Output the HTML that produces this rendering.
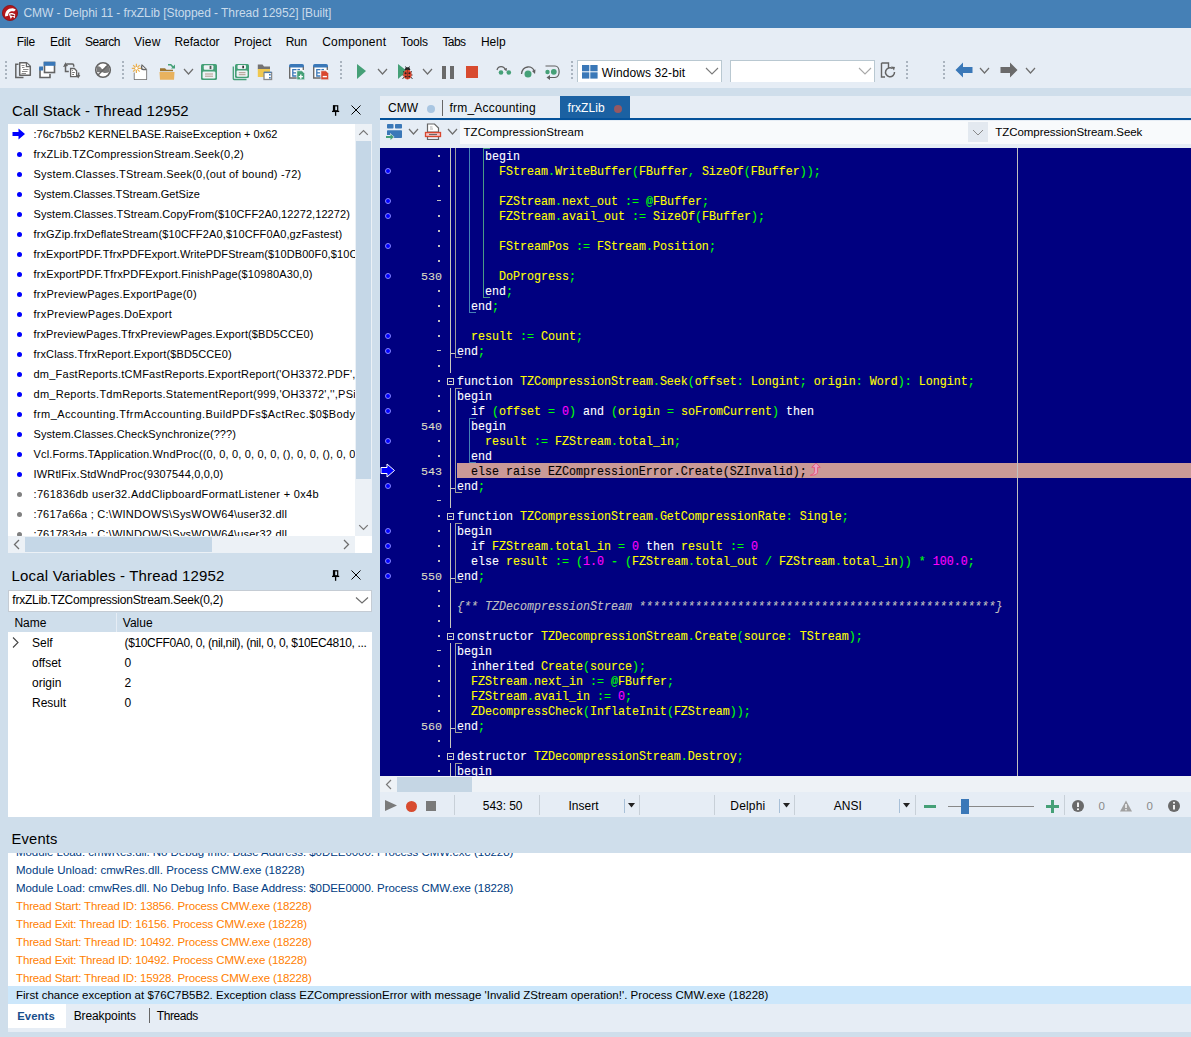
<!DOCTYPE html>
<html><head><meta charset="utf-8"><style>
html,body{margin:0;padding:0;width:1191px;height:1037px;overflow:hidden;position:relative;background:#cfdeeb;}
.t{position:absolute;white-space:pre;font-family:"Liberation Sans",sans-serif;}
.r{position:absolute;}
.code{position:absolute;white-space:pre;font-family:"Liberation Mono",monospace;}
</style></head><body>
<div class="r" style="left:0px;top:0px;width:1191px;height:1037px;background:#cfdeeb;"></div><div class="r" style="left:0px;top:0px;width:1191px;height:28px;background:#4580b6;"></div><div class="r" style="left:0px;top:28px;width:1191px;height:60px;background:#e6edf5;"></div><svg class="r" style="left:2px;top:5px;" width="17" height="17" viewBox="0 0 17 17"><circle cx="8" cy="8" r="7.6" fill="#b3161b" stroke="#8a1014" stroke-width="0.8"/><path d="M3.2 11.5 C2.5 6.5 6.5 2.8 11.5 3.4 C12.6 3.6 13.4 4.1 13.8 4.8 L12 6.5 C9 5.3 5.8 7.5 6.2 10.8 Z" fill="#fff"/><path d="M6.8 8.8 C8.8 7.6 11.5 8 13.2 9.6 L12.8 13.3 L10.3 11.6 L8.8 14 Z" fill="#fff"/><path d="M8.5 9.8 L12.3 10.6" stroke="#8a1014" stroke-width="1.2"/></svg><div class="t" style="left:23.4px;top:4.84px;font-size:12px;line-height:16px;color:#c9dbeb;font-family:'Liberation Sans';letter-spacing:-0.052px;">CMW - Delphi 11 - frxZLib [Stopped - Thread 12952] [Built]</div><div class="t" style="left:16.8px;top:33.84px;font-size:12px;line-height:16px;color:#000;font-family:'Liberation Sans';letter-spacing:-0.336px;">File</div><div class="t" style="left:49.9px;top:33.84px;font-size:12px;line-height:16px;color:#000;font-family:'Liberation Sans';letter-spacing:-0.022px;">Edit</div><div class="t" style="left:85.1px;top:33.84px;font-size:12px;line-height:16px;color:#000;font-family:'Liberation Sans';letter-spacing:-0.555px;">Search</div><div class="t" style="left:134.1px;top:33.84px;font-size:12px;line-height:16px;color:#000;font-family:'Liberation Sans';letter-spacing:0.151px;">View</div><div class="t" style="left:174.5px;top:33.84px;font-size:12px;line-height:16px;color:#000;font-family:'Liberation Sans';letter-spacing:-0.045px;">Refactor</div><div class="t" style="left:234.1px;top:33.84px;font-size:12px;line-height:16px;color:#000;font-family:'Liberation Sans';letter-spacing:-0.023px;">Project</div><div class="t" style="left:285.7px;top:33.84px;font-size:12px;line-height:16px;color:#000;font-family:'Liberation Sans';letter-spacing:-0.272px;">Run</div><div class="t" style="left:322.2px;top:33.84px;font-size:12px;line-height:16px;color:#000;font-family:'Liberation Sans';letter-spacing:0.217px;">Component</div><div class="t" style="left:400.8px;top:33.84px;font-size:12px;line-height:16px;color:#000;font-family:'Liberation Sans';letter-spacing:-0.203px;">Tools</div><div class="t" style="left:442.4px;top:33.84px;font-size:12px;line-height:16px;color:#000;font-family:'Liberation Sans';letter-spacing:-0.565px;">Tabs</div><div class="t" style="left:480.9px;top:33.84px;font-size:12px;line-height:16px;color:#000;font-family:'Liberation Sans';letter-spacing:0.003px;">Help</div><svg class="r" style="left:5px;top:61px;" width="2" height="20" viewBox="0 0 2 20"><rect x="0" y="0" width="2" height="2" fill="#aab4bf"/><rect x="0" y="4" width="2" height="2" fill="#aab4bf"/><rect x="0" y="8" width="2" height="2" fill="#aab4bf"/><rect x="0" y="12" width="2" height="2" fill="#aab4bf"/><rect x="0" y="16" width="2" height="2" fill="#aab4bf"/></svg><svg class="r" style="left:14px;top:61px;" width="18" height="18" viewBox="0 0 18 18"><path d="M4.5 3.3 H1.8 V16.5 H9.5" fill="none" stroke="#646464" stroke-width="1.5"/><path d="M5.7 1.7 H12.6 L16.3 5.4 V14.3 H5.7 Z" fill="#fff" stroke="#646464" stroke-width="1.5" stroke-linejoin="round"/><path d="M12.4 2 V5.6 H16" fill="#e6edf5" stroke="#646464" stroke-width="1.2"/><path d="M7.5 4.5 H10.5 M8 6.5 H10.5 M9 8.5 H14.5 M8 10.5 H13.5 M7.5 12.5 H12" stroke="#8a8a8a" stroke-width="1"/></svg><svg class="r" style="left:38px;top:61px;" width="18" height="18" viewBox="0 0 18 18"><path d="M2 6.5 V16.5 H12 V13" fill="#fff" stroke="#646464" stroke-width="1.6"/><rect x="1.2" y="5.5" width="3.8" height="4" fill="#3a78b8"/><rect x="6.5" y="1.5" width="10" height="10" fill="#fff" stroke="#646464" stroke-width="1.6"/><rect x="5.7" y="0.8" width="11.6" height="4" fill="#3a78b8"/></svg><svg class="r" style="left:62px;top:61px;" width="20" height="19" viewBox="0 0 20 19"><path d="M3.5 3 V10.4 H6.8" fill="none" stroke="#646464" stroke-width="1.5"/><path d="M1 6 L3.6 1.3 L6 5 Z" fill="#646464"/><path d="M4.5 3 H10.5 Q11.7 3 11.7 4.2 V5.8" fill="none" stroke="#646464" stroke-width="1.5"/><path d="M8.6 7.5 H12.3 L14.6 9.8 V15.6 H8.6 Z" fill="#fff" stroke="#646464" stroke-width="1.3"/><path d="M10.2 9.5 H11 M10.2 11.5 H12.8 M10.2 13.5 H12" stroke="#646464" stroke-width="0.9"/><path d="M16.6 11.5 V15.5" stroke="#646464" stroke-width="1.5"/><path d="M14 14.2 L16.2 17.4 L18.4 14 Z" fill="#646464"/></svg><svg class="r" style="left:94px;top:61px;" width="18" height="18" viewBox="0 0 18 18"><circle cx="9" cy="9" r="7.3" fill="#fff" stroke="#646464" stroke-width="1.6"/><path d="M2.5 6 C4 4.5 6 5 7.5 7.5 C8.5 9 10 8 11.5 5.5 C12.5 4.5 14.5 5 15.5 7 L15.5 11 C13 12 11 12.5 9 11.5 C7 10.5 5 11.5 3 11 Z" fill="#7a7a7a"/><path d="M3.8 14.2 L14.2 3.8" stroke="#646464" stroke-width="1.5"/></svg><svg class="r" style="left:122px;top:61px;" width="2" height="20" viewBox="0 0 2 20"><rect x="0" y="0" width="2" height="2" fill="#aab4bf"/><rect x="0" y="4" width="2" height="2" fill="#aab4bf"/><rect x="0" y="8" width="2" height="2" fill="#aab4bf"/><rect x="0" y="12" width="2" height="2" fill="#aab4bf"/><rect x="0" y="16" width="2" height="2" fill="#aab4bf"/></svg><svg class="r" style="left:131px;top:62px;" width="18" height="19" viewBox="0 0 18 19"><path d="M10.2 3.3 H11 L15.3 7.6 V17.3 H3.6 V10.8" fill="#fff" stroke="#646464" stroke-width="1.6" stroke-linejoin="round"/><path d="M3.6 10.8 C7 10.5 10 8 10.2 3.3 L15.3 7.6 V17.3 H3.6 Z" fill="#fff"/><path d="M10.6 3.5 V6 Q10.6 7.5 12.2 7.5 H15" fill="none" stroke="#646464" stroke-width="1.5"/><path d="M5.4 1.8 V11 M0.8 6.4 H10 M2.1 3.1 L8.7 9.7 M8.7 3.1 L2.1 9.7" stroke="#ebb050" stroke-width="1.2"/><circle cx="5.4" cy="6.4" r="1.3" fill="#fff"/></svg><svg class="r" style="left:158px;top:62px;" width="18" height="19" viewBox="0 0 18 19"><path d="M2 6.2 H7 L8.5 7.7 H15 V9.3 H2 Z" fill="#9a7430"/><path d="M1.5 10 H16.5 L16 17.8 H2 Z" fill="#e8b25e"/><path d="M10 2.8 H12.8 L15.6 5.6" fill="none" stroke="#45a077" stroke-width="1.5"/><path d="M13 6.6 H17 V2.6 Z" fill="#45a077"/></svg><svg class="r" style="left:183px;top:68px;" width="11" height="7" viewBox="0 0 11 7"><path d="M1 1 L5.5 6 L10 1" fill="none" stroke="#6e6e6e" stroke-width="1.2"/></svg><svg class="r" style="left:200px;top:63px;" width="18" height="18" viewBox="0 0 18 18"><rect x="1" y="1" width="16" height="16" rx="1.6" fill="#45a077"/><rect x="3.8" y="2.2" width="9.6" height="4.6" rx="1" fill="#eef2f5"/><rect x="9.6" y="2.8" width="1.8" height="3.3" fill="#555"/><rect x="2.6" y="8.4" width="12.8" height="7.2" rx="1.4" fill="#eef2f5"/><path d="M5 11 H13 M5 13.2 H13" stroke="#a89080" stroke-width="0.9"/></svg><svg class="r" style="left:232px;top:63px;" width="18" height="18" viewBox="0 0 18 18"><path d="M1.3 3.5 V15.8 Q1.3 16.5 2 16.5 H14.5" fill="none" stroke="#45a077" stroke-width="1.3"/><rect x="3" y="1" width="14" height="14" rx="1.5" fill="#45a077"/><rect x="5.5" y="2.1" width="8.5" height="4" rx="1" fill="#eef2f5"/><rect x="10.3" y="2.7" width="1.7" height="2.6" fill="#333"/><rect x="4.6" y="7.5" width="11" height="6.3" rx="1.3" fill="#eef2f5"/><path d="M6.8 9.7 H13.5 M6.8 11.7 H13.5" stroke="#a89080" stroke-width="0.9"/></svg><svg class="r" style="left:256px;top:63px;" width="18" height="18" viewBox="0 0 18 18"><path d="M1.8 1.6 H6.5 L8 3.6 H14 V6.2 H1.8 Z" fill="#737373"/><path d="M1.8 6 H14 V14 H1.8 Z" fill="#f0c850"/><rect x="8" y="9.5" width="7.6" height="7" fill="#fff" stroke="#8a8a8a" stroke-width="1.3"/><path d="M8 9.2 H15.6" stroke="#3a78b8" stroke-width="1"/><rect x="13" y="11" width="1.7" height="1.5" fill="#3a78b8"/><rect x="13" y="14" width="1.7" height="1.5" fill="#3a78b8"/></svg><svg class="r" style="left:288px;top:63px;" width="18" height="18" viewBox="0 0 18 18"><rect x="2" y="3" width="13.5" height="12" fill="#fff"/><path d="M1 4.6 V2.8 Q1 1 2.8 1 H14.2 Q16 1 16 2.8 V4.6 Z" fill="#3a78b8"/><path d="M1.7 4 V15 H9" fill="none" stroke="#6a6a6a" stroke-width="1.4"/><path d="M15.3 4 V7" stroke="#6a6a6a" stroke-width="1.3"/><path d="M8.5 6.6 H4.8 V13 H8.5 M4.8 9.8 H8" fill="none" stroke="#3a78b8" stroke-width="1.3"/><path d="M9.4 6.6 H12" stroke="#3a78b8" stroke-width="1.3"/><path d="M8.9 7.8 H14 L16.6 10.4 V16.7 H8.9 Z" fill="#45a077" stroke="#e6edf5" stroke-width="0.6"/><path d="M10.7 13.6 H14.9 M12.8 11.5 V15.7" stroke="#fff" stroke-width="1.4"/></svg><svg class="r" style="left:312px;top:63px;" width="18" height="18" viewBox="0 0 18 18"><rect x="2" y="3" width="13.5" height="12" fill="#fff"/><path d="M1 4.6 V2.8 Q1 1 2.8 1 H14.2 Q16 1 16 2.8 V4.6 Z" fill="#3a78b8"/><path d="M1.7 4 V15 H9" fill="none" stroke="#6a6a6a" stroke-width="1.4"/><path d="M15.3 4 V7" stroke="#6a6a6a" stroke-width="1.3"/><path d="M8.5 6.6 H4.8 V13 H8.5 M4.8 9.8 H8" fill="none" stroke="#3a78b8" stroke-width="1.3"/><path d="M9.4 6.6 H12" stroke="#3a78b8" stroke-width="1.3"/><path d="M8.9 7.8 H14 L16.6 10.4 V16.7 H8.9 Z" fill="#d9472f" stroke="#e6edf5" stroke-width="0.6"/><path d="M10.7 13.6 H14.9" stroke="#fff" stroke-width="1.4"/></svg><svg class="r" style="left:340px;top:61px;" width="2" height="20" viewBox="0 0 2 20"><rect x="0" y="0" width="2" height="2" fill="#aab4bf"/><rect x="0" y="4" width="2" height="2" fill="#aab4bf"/><rect x="0" y="8" width="2" height="2" fill="#aab4bf"/><rect x="0" y="12" width="2" height="2" fill="#aab4bf"/><rect x="0" y="16" width="2" height="2" fill="#aab4bf"/></svg><svg class="r" style="left:356px;top:63px;" width="11" height="17" viewBox="0 0 11 17"><path d="M1 1 L10 8 L1 16 Z" fill="#45a077"/></svg><svg class="r" style="left:377px;top:68px;" width="11" height="7" viewBox="0 0 11 7"><path d="M1 1 L5.5 6 L10 1" fill="none" stroke="#6e6e6e" stroke-width="1.2"/></svg><svg class="r" style="left:396px;top:63px;" width="20" height="18" viewBox="0 0 20 18"><path d="M2 1 L11 8 L2 16 Z" fill="#45a077"/><path d="M9.5 3.5 L10.5 5 M13.5 3.5 L12.5 5 M7 8.5 L8.5 9.5 M16 8.5 L14.5 9.5 M6.5 15.5 L8.3 14.3 M16.5 15.5 L14.7 14.3 M6.5 12 H8 M15 12 H16.5" stroke="#222" stroke-width="1"/><ellipse cx="11.5" cy="6.2" rx="2.6" ry="1.9" fill="#222"/><ellipse cx="11.5" cy="11.6" rx="4.2" ry="4.9" fill="#d9472f"/><path d="M11.5 7 V16" stroke="#7a2a1a" stroke-width="0.6"/><circle cx="9.6" cy="10.2" r="1" fill="#222"/><circle cx="13.4" cy="10.2" r="1" fill="#222"/><circle cx="9.8" cy="13.6" r="0.9" fill="#222"/><circle cx="13.2" cy="13.6" r="0.9" fill="#222"/></svg><svg class="r" style="left:422px;top:68px;" width="11" height="7" viewBox="0 0 11 7"><path d="M1 1 L5.5 6 L10 1" fill="none" stroke="#6e6e6e" stroke-width="1.2"/></svg><div class="r" style="left:442px;top:65.5px;width:4px;height:13px;background:#6a6a6a;"></div><div class="r" style="left:450px;top:65.5px;width:4px;height:13px;background:#6a6a6a;"></div><div class="r" style="left:466px;top:66px;width:12px;height:12px;background:#d84b2f;"></div><svg class="r" style="left:495px;top:65px;" width="18" height="12" viewBox="0 0 18 12"><path d="M2 5 C3 0.5 9 0.5 10.5 5" fill="none" stroke="#606060" stroke-width="1.2"/><path d="M9 4 L11.5 6.5 L12 3 Z" fill="#606060"/><circle cx="6" cy="7.5" r="2.3" fill="#45a077"/><circle cx="13.8" cy="7.5" r="2.3" fill="#45a077"/></svg><svg class="r" style="left:520px;top:65px;" width="18" height="15" viewBox="0 0 18 15"><path d="M1.5 9 C2.5 0 13 0 14.5 7" fill="none" stroke="#606060" stroke-width="1.3"/><path d="M12 6 L15 9 L15.5 4.5 Z" fill="#606060"/><circle cx="8" cy="9" r="3.5" fill="#45a077"/></svg><svg class="r" style="left:544px;top:64px;" width="17" height="16" viewBox="0 0 17 16"><path d="M1.5 2 H11 C16.5 2 16.5 13.5 11 13.5 H5" fill="none" stroke="#606060" stroke-width="1.2"/><path d="M6 11 L2.5 13.5 L6 16 Z" fill="#606060"/><circle cx="3.5" cy="8" r="2.2" fill="#45a077"/><circle cx="9.8" cy="7.8" r="2.9" fill="#45a077"/></svg><svg class="r" style="left:571px;top:61px;" width="2" height="20" viewBox="0 0 2 20"><rect x="0" y="0" width="2" height="2" fill="#aab4bf"/><rect x="0" y="4" width="2" height="2" fill="#aab4bf"/><rect x="0" y="8" width="2" height="2" fill="#aab4bf"/><rect x="0" y="12" width="2" height="2" fill="#aab4bf"/><rect x="0" y="16" width="2" height="2" fill="#aab4bf"/></svg><div class="r" style="left:577px;top:60px;width:145px;height:22px;background:#fff;box-sizing:border-box;border:1px solid #b9c8d1;border-bottom:none;"></div><svg class="r" style="left:582px;top:65px;" width="16" height="14" viewBox="0 0 16 14"><rect x="0" y="0" width="7.3" height="6.3" fill="#3a78b8"/><rect x="8.3" y="0" width="7.3" height="6.3" fill="#3a78b8"/><rect x="0" y="7.3" width="7.3" height="6.3" fill="#3a78b8"/><rect x="8.3" y="7.3" width="7.3" height="6.3" fill="#3a78b8"/></svg><div class="t" style="left:601.8px;top:64.84px;font-size:12px;line-height:16px;color:#000;font-family:'Liberation Sans';letter-spacing:0.091px;">Windows 32-bit</div><svg class="r" style="left:705px;top:67px;" width="14" height="8" viewBox="0 0 14 8"><path d="M1 1 L7.0 7 L13 1" fill="none" stroke="#7a7a7a" stroke-width="1.1"/></svg><div class="r" style="left:730px;top:60px;width:145px;height:22px;background:#fff;box-sizing:border-box;border:1px solid #b9c8d1;border-bottom:none;"></div><svg class="r" style="left:858px;top:67px;" width="14" height="8" viewBox="0 0 14 8"><path d="M1 1 L7.0 7 L13 1" fill="none" stroke="#a8a8a8" stroke-width="1.1"/></svg><svg class="r" style="left:880px;top:62px;" width="17" height="18" viewBox="0 0 17 18"><path d="M1.5 1 H8.5 V6 M1.5 1 V15 H5" fill="none" stroke="#646464" stroke-width="1.4"/><path d="M14.5 10 A4.5 4.5 0 1 1 12.5 6.5" fill="none" stroke="#646464" stroke-width="1.5"/><path d="M11 4.5 L15 5 L14 8.5 Z" fill="#646464"/></svg><svg class="r" style="left:906px;top:61px;" width="2" height="20" viewBox="0 0 2 20"><rect x="0" y="0" width="2" height="2" fill="#aab4bf"/><rect x="0" y="4" width="2" height="2" fill="#aab4bf"/><rect x="0" y="8" width="2" height="2" fill="#aab4bf"/><rect x="0" y="12" width="2" height="2" fill="#aab4bf"/><rect x="0" y="16" width="2" height="2" fill="#aab4bf"/></svg><svg class="r" style="left:943px;top:61px;" width="2" height="20" viewBox="0 0 2 20"><rect x="0" y="0" width="2" height="2" fill="#aab4bf"/><rect x="0" y="4" width="2" height="2" fill="#aab4bf"/><rect x="0" y="8" width="2" height="2" fill="#aab4bf"/><rect x="0" y="12" width="2" height="2" fill="#aab4bf"/><rect x="0" y="16" width="2" height="2" fill="#aab4bf"/></svg><svg class="r" style="left:955px;top:62px;" width="18" height="16" viewBox="0 0 18 16"><path d="M0.5 8 L8 0.5 V5 H17.5 V11 H8 V15.5 Z" fill="#3a78b8"/></svg><svg class="r" style="left:979px;top:67px;" width="11" height="7" viewBox="0 0 11 7"><path d="M1 1 L5.5 6 L10 1" fill="none" stroke="#6e6e6e" stroke-width="1.2"/></svg><svg class="r" style="left:1000px;top:62px;" width="18" height="16" viewBox="0 0 18 16"><path d="M17.5 8 L10 0.5 V5 H0.5 V11 H10 V15.5 Z" fill="#6a6a6a"/></svg><svg class="r" style="left:1025px;top:67px;" width="11" height="7" viewBox="0 0 11 7"><path d="M1 1 L5.5 6 L10 1" fill="none" stroke="#6e6e6e" stroke-width="1.2"/></svg><div class="t" style="left:12.1px;top:100.80px;font-size:15px;line-height:20px;color:#000;font-family:'Liberation Sans';letter-spacing:0.108px;">Call Stack - Thread 12952</div><svg class="r" style="left:331px;top:104.5px;" width="9" height="11" viewBox="0 0 9 11"><rect x="2.5" y="0.8" width="4.2" height="5" fill="none" stroke="#000" stroke-width="1.2"/><rect x="2" y="0.5" width="2.2" height="5.5" fill="#000"/><path d="M1 6.4 H8.2" stroke="#000" stroke-width="1.3"/><path d="M4.6 6.5 V10.8" stroke="#000" stroke-width="1.3"/></svg><svg class="r" style="left:351px;top:105.0px;" width="10" height="10" viewBox="0 0 10 10"><path d="M0.5 0.5 L9.5 9.5 M9.5 0.5 L0.5 9.5" stroke="#000" stroke-width="1"/></svg><div class="r" style="left:8px;top:124px;width:347px;height:412px;background:#fff;"></div><div class="r" style="left:355px;top:124px;width:17px;height:412px;background:#ecf1f6;"></div><div class="r" style="left:356px;top:141px;width:15px;height:338px;background:#c5d7e7;"></div><svg class="r" style="left:358px;top:129px;" width="11" height="7" viewBox="0 0 11 7"><path d="M1.2 5.8 L5.5 1.5 L9.8 5.8" fill="none" stroke="#767676" stroke-width="1.2"/></svg><svg class="r" style="left:358px;top:524px;" width="11" height="7" viewBox="0 0 11 7"><path d="M1.2 1.2 L5.5 5.5 L9.8 1.2" fill="none" stroke="#767676" stroke-width="1.2"/></svg><div class="r" style="left:8px;top:536px;width:347px;height:17px;background:#ecf1f6;"></div><div class="r" style="left:25px;top:537px;width:187px;height:15px;background:#c5d7e7;"></div><svg class="r" style="left:13px;top:539px;" width="8" height="11" viewBox="0 0 8 11"><path d="M6 1 L1.5 5.5 L6 10" fill="none" stroke="#6e6e6e" stroke-width="1.3"/></svg><svg class="r" style="left:342px;top:539px;" width="8" height="11" viewBox="0 0 8 11"><path d="M2 1 L6.5 5.5 L2 10" fill="none" stroke="#6e6e6e" stroke-width="1.3"/></svg><div class="r" style="left:355px;top:536px;width:17px;height:17px;background:#fff;"></div><div class="r" style="left:8px;top:124px;width:347px;height:412px;overflow:hidden"><div class="t" style="left:25.5px;top:3.19px;font-size:11px;line-height:14px;color:#000;font-family:'Liberation Sans';letter-spacing:0.007px;">:76c7b5b2 KERNELBASE.RaiseException + 0x62</div><svg class="r" style="left:4px;top:4px" width="14" height="12" viewBox="0 0 14 12"><path d="M0.5 4 H6.5 V0.5 L13 6 L6.5 11.5 V8 H0.5 Z" fill="#0000ff"/></svg><div class="t" style="left:25.5px;top:23.19px;font-size:11px;line-height:14px;color:#000;font-family:'Liberation Sans';letter-spacing:0.253px;">frxZLib.TZCompressionStream.Seek(0,2)</div><div class="r" style="left:9px;top:28px;width:5px;height:5px;border-radius:50%;background:#0000ff"></div><div class="t" style="left:25.5px;top:43.19px;font-size:11px;line-height:14px;color:#000;font-family:'Liberation Sans';letter-spacing:0.241px;">System.Classes.TStream.Seek(0,(out of bound) -72)</div><div class="r" style="left:9px;top:48px;width:5px;height:5px;border-radius:50%;background:#0000ff"></div><div class="t" style="left:25.5px;top:63.19px;font-size:11px;line-height:14px;color:#000;font-family:'Liberation Sans';letter-spacing:0.007px;">System.Classes.TStream.GetSize</div><div class="r" style="left:9px;top:68px;width:5px;height:5px;border-radius:50%;background:#0000ff"></div><div class="t" style="left:25.5px;top:83.19px;font-size:11px;line-height:14px;color:#000;font-family:'Liberation Sans';letter-spacing:0.074px;">System.Classes.TStream.CopyFrom($10CFF2A0,12272,12272)</div><div class="r" style="left:9px;top:88px;width:5px;height:5px;border-radius:50%;background:#0000ff"></div><div class="t" style="left:25.5px;top:103.19px;font-size:11px;line-height:14px;color:#000;font-family:'Liberation Sans';letter-spacing:0.135px;">frxGZip.frxDeflateStream($10CFF2A0,$10CFF0A0,gzFastest)</div><div class="r" style="left:9px;top:108px;width:5px;height:5px;border-radius:50%;background:#0000ff"></div><div class="t" style="left:25.5px;top:123.19px;font-size:11px;line-height:14px;color:#000;font-family:'Liberation Sans';letter-spacing:0.102px;">frxExportPDF.TfrxPDFExport.WritePDFStream($10DB00F0,$10C</div><div class="r" style="left:9px;top:128px;width:5px;height:5px;border-radius:50%;background:#0000ff"></div><div class="t" style="left:25.5px;top:143.19px;font-size:11px;line-height:14px;color:#000;font-family:'Liberation Sans';letter-spacing:0.151px;">frxExportPDF.TfrxPDFExport.FinishPage($10980A30,0)</div><div class="r" style="left:9px;top:148px;width:5px;height:5px;border-radius:50%;background:#0000ff"></div><div class="t" style="left:25.5px;top:163.19px;font-size:11px;line-height:14px;color:#000;font-family:'Liberation Sans';letter-spacing:0.234px;">frxPreviewPages.ExportPage(0)</div><div class="r" style="left:9px;top:168px;width:5px;height:5px;border-radius:50%;background:#0000ff"></div><div class="t" style="left:25.5px;top:183.19px;font-size:11px;line-height:14px;color:#000;font-family:'Liberation Sans';letter-spacing:0.302px;">frxPreviewPages.DoExport</div><div class="r" style="left:9px;top:188px;width:5px;height:5px;border-radius:50%;background:#0000ff"></div><div class="t" style="left:25.5px;top:203.19px;font-size:11px;line-height:14px;color:#000;font-family:'Liberation Sans';letter-spacing:0.125px;">frxPreviewPages.TfrxPreviewPages.Export($BD5CCE0)</div><div class="r" style="left:9px;top:208px;width:5px;height:5px;border-radius:50%;background:#0000ff"></div><div class="t" style="left:25.5px;top:223.19px;font-size:11px;line-height:14px;color:#000;font-family:'Liberation Sans';letter-spacing:0.128px;">frxClass.TfrxReport.Export($BD5CCE0)</div><div class="r" style="left:9px;top:228px;width:5px;height:5px;border-radius:50%;background:#0000ff"></div><div class="t" style="left:25.5px;top:243.19px;font-size:11px;line-height:14px;color:#000;font-family:'Liberation Sans';letter-spacing:0.228px;">dm_FastReports.tCMFastReports.ExportReport(&#x27;OH3372.PDF&#x27;,</div><div class="r" style="left:9px;top:248px;width:5px;height:5px;border-radius:50%;background:#0000ff"></div><div class="t" style="left:25.5px;top:263.19px;font-size:11px;line-height:14px;color:#000;font-family:'Liberation Sans';letter-spacing:0.265px;">dm_Reports.TdmReports.StatementReport(999,&#x27;OH3372&#x27;,&#x27;&#x27;,PSi</div><div class="r" style="left:9px;top:268px;width:5px;height:5px;border-radius:50%;background:#0000ff"></div><div class="t" style="left:25.5px;top:283.19px;font-size:11px;line-height:14px;color:#000;font-family:'Liberation Sans';letter-spacing:0.415px;">frm_Accounting.TfrmAccounting.BuildPDFs$ActRec.$0$Body</div><div class="r" style="left:9px;top:288px;width:5px;height:5px;border-radius:50%;background:#0000ff"></div><div class="t" style="left:25.5px;top:303.19px;font-size:11px;line-height:14px;color:#000;font-family:'Liberation Sans';letter-spacing:0.089px;">System.Classes.CheckSynchronize(???)</div><div class="r" style="left:9px;top:308px;width:5px;height:5px;border-radius:50%;background:#0000ff"></div><div class="t" style="left:25.5px;top:323.19px;font-size:11px;line-height:14px;color:#000;font-family:'Liberation Sans';letter-spacing:0.162px;">Vcl.Forms.TApplication.WndProc((0, 0, 0, 0, 0, 0, (), 0, 0, (), 0, 0</div><div class="r" style="left:9px;top:328px;width:5px;height:5px;border-radius:50%;background:#0000ff"></div><div class="t" style="left:25.5px;top:343.19px;font-size:11px;line-height:14px;color:#000;font-family:'Liberation Sans';letter-spacing:0.170px;">IWRtlFix.StdWndProc(9307544,0,0,0)</div><div class="r" style="left:9px;top:348px;width:5px;height:5px;border-radius:50%;background:#0000ff"></div><div class="t" style="left:25.5px;top:363.19px;font-size:11px;line-height:14px;color:#000;font-family:'Liberation Sans';letter-spacing:0.335px;">:761836db user32.AddClipboardFormatListener + 0x4b</div><div class="r" style="left:9px;top:368px;width:5px;height:5px;border-radius:50%;background:#808080"></div><div class="t" style="left:25.5px;top:383.19px;font-size:11px;line-height:14px;color:#000;font-family:'Liberation Sans';letter-spacing:0.216px;">:7617a66a ; C:\WINDOWS\SysWOW64\user32.dll</div><div class="r" style="left:9px;top:388px;width:5px;height:5px;border-radius:50%;background:#808080"></div><div class="t" style="left:25.5px;top:403.19px;font-size:11px;line-height:14px;color:#000;font-family:'Liberation Sans';letter-spacing:0.216px;">:761783da ; C:\WINDOWS\SysWOW64\user32.dll</div><div class="r" style="left:9px;top:408px;width:5px;height:5px;border-radius:50%;background:#808080"></div></div><div class="t" style="left:11.6px;top:565.80px;font-size:15px;line-height:20px;color:#000;font-family:'Liberation Sans';letter-spacing:0.169px;">Local Variables - Thread 12952</div><svg class="r" style="left:331px;top:569.5px;" width="9" height="11" viewBox="0 0 9 11"><rect x="2.5" y="0.8" width="4.2" height="5" fill="none" stroke="#000" stroke-width="1.2"/><rect x="2" y="0.5" width="2.2" height="5.5" fill="#000"/><path d="M1 6.4 H8.2" stroke="#000" stroke-width="1.3"/><path d="M4.6 6.5 V10.8" stroke="#000" stroke-width="1.3"/></svg><svg class="r" style="left:351px;top:570.0px;" width="10" height="10" viewBox="0 0 10 10"><path d="M0.5 0.5 L9.5 9.5 M9.5 0.5 L0.5 9.5" stroke="#000" stroke-width="1"/></svg><div class="r" style="left:8px;top:590px;width:364px;height:22px;background:#fff;box-sizing:border-box;border:1px solid #c5ccd4;"></div><div class="t" style="left:12.3px;top:591.84px;font-size:12px;line-height:16px;color:#000;font-family:'Liberation Sans';letter-spacing:-0.238px;">frxZLib.TZCompressionStream.Seek(0,2)</div><svg class="r" style="left:355px;top:596px;" width="14" height="9" viewBox="0 0 14 9"><path d="M1 1.5 L7 7 L13 1.5" fill="none" stroke="#6e6e6e" stroke-width="1.2"/></svg><div class="r" style="left:8px;top:613px;width:364px;height:19px;background:#cfdeeb;"></div><div class="r" style="left:116px;top:613px;width:1px;height:19px;background:#e6edf5;"></div><div class="t" style="left:14.4px;top:614.54px;font-size:12px;line-height:16px;color:#000;font-family:'Liberation Sans';">Name</div><div class="t" style="left:122.8px;top:614.54px;font-size:12px;line-height:16px;color:#000;font-family:'Liberation Sans';">Value</div><div class="r" style="left:8px;top:632px;width:364px;height:185px;background:#fff;"></div><svg class="r" style="left:11px;top:636px;" width="9" height="13" viewBox="0 0 9 13"><path d="M2 1.5 L7 6.5 L2 11.5" fill="none" stroke="#444" stroke-width="1.1"/></svg><div class="t" style="left:32px;top:634.84px;font-size:12px;line-height:16px;color:#000;font-family:'Liberation Sans';">Self</div><div class="t" style="left:124.5px;top:634.84px;font-size:12px;line-height:16px;color:#000;font-family:'Liberation Sans';letter-spacing:-0.349px;">($10CFF0A0, 0, (nil,nil), (nil, 0, 0, $10EC4810, ...</div><div class="t" style="left:32px;top:654.84px;font-size:12px;line-height:16px;color:#000;font-family:'Liberation Sans';">offset</div><div class="t" style="left:124.5px;top:654.84px;font-size:12px;line-height:16px;color:#000;font-family:'Liberation Sans';">0</div><div class="t" style="left:32px;top:674.84px;font-size:12px;line-height:16px;color:#000;font-family:'Liberation Sans';">origin</div><div class="t" style="left:124.5px;top:674.84px;font-size:12px;line-height:16px;color:#000;font-family:'Liberation Sans';">2</div><div class="t" style="left:32px;top:694.84px;font-size:12px;line-height:16px;color:#000;font-family:'Liberation Sans';">Result</div><div class="t" style="left:124.5px;top:694.84px;font-size:12px;line-height:16px;color:#000;font-family:'Liberation Sans';">0</div><div class="t" style="left:11.6px;top:830.41px;font-size:14.7px;line-height:19px;color:#000;font-family:'Liberation Sans';letter-spacing:0.182px;">Events</div><div class="r" style="left:8px;top:853px;width:1183px;height:151px;background:#fff;"></div><div class="r" style="left:8px;top:986px;width:1183px;height:18px;background:#cce7fb;"></div><div class="r" style="left:8px;top:853px;width:1183px;height:151px;overflow:hidden"><div class="t" style="left:8.0px;top:-8.48px;font-size:11.5px;line-height:15px;color:#003c82;font-family:'Liberation Sans';letter-spacing:-0.051px;">Module Load: cmwRes.dll. No Debug Info. Base Address: $0DEE0000. Process CMW.exe (18228)</div><div class="t" style="left:8.0px;top:9.52px;font-size:11.5px;line-height:15px;color:#003c82;font-family:'Liberation Sans';letter-spacing:0.045px;">Module Unload: cmwRes.dll. Process CMW.exe (18228)</div><div class="t" style="left:8.0px;top:27.52px;font-size:11.5px;line-height:15px;color:#003c82;font-family:'Liberation Sans';letter-spacing:-0.051px;">Module Load: cmwRes.dll. No Debug Info. Base Address: $0DEE0000. Process CMW.exe (18228)</div><div class="t" style="left:8.0px;top:45.52px;font-size:11.5px;line-height:15px;color:#ff8000;font-family:'Liberation Sans';letter-spacing:-0.142px;">Thread Start: Thread ID: 13856. Process CMW.exe (18228)</div><div class="t" style="left:8.0px;top:63.52px;font-size:11.5px;line-height:15px;color:#ff8000;font-family:'Liberation Sans';letter-spacing:-0.137px;">Thread Exit: Thread ID: 16156. Process CMW.exe (18228)</div><div class="t" style="left:8.0px;top:81.52px;font-size:11.5px;line-height:15px;color:#ff8000;font-family:'Liberation Sans';letter-spacing:-0.142px;">Thread Start: Thread ID: 10492. Process CMW.exe (18228)</div><div class="t" style="left:8.0px;top:99.52px;font-size:11.5px;line-height:15px;color:#ff8000;font-family:'Liberation Sans';letter-spacing:-0.137px;">Thread Exit: Thread ID: 10492. Process CMW.exe (18228)</div><div class="t" style="left:8.0px;top:117.52px;font-size:11.5px;line-height:15px;color:#ff8000;font-family:'Liberation Sans';letter-spacing:-0.142px;">Thread Start: Thread ID: 15928. Process CMW.exe (18228)</div><div class="t" style="left:8.0px;top:135.02px;font-size:11.5px;line-height:15px;color:#000;font-family:'Liberation Sans';letter-spacing:0.015px;">First chance exception at $76C7B5B2. Exception class EZCompressionError with message &#x27;Invalid ZStream operation!&#x27;. Process CMW.exe (18228)</div></div><div class="r" style="left:8px;top:1004px;width:1183px;height:28px;background:#e6edf5;"></div><div class="r" style="left:8px;top:1004px;width:58px;height:24px;background:#fff;"></div><div class="t" style="left:17.2px;top:1008.58px;font-size:11.3px;line-height:15px;color:#174e8c;font-family:'Liberation Sans';letter-spacing:0.109px;font-weight:bold;">Events</div><div class="t" style="left:73.7px;top:1007.84px;font-size:12px;line-height:16px;color:#000;font-family:'Liberation Sans';letter-spacing:-0.107px;">Breakpoints</div><div class="r" style="left:149px;top:1008px;width:1px;height:15px;background:#666;"></div><div class="t" style="left:156.7px;top:1007.84px;font-size:12px;line-height:16px;color:#000;font-family:'Liberation Sans';letter-spacing:-0.390px;">Threads</div><div class="r" style="left:380px;top:96px;width:811px;height:22px;background:#e6edf5;"></div><div class="t" style="left:387.9px;top:100.14px;font-size:12px;line-height:16px;color:#000;font-family:'Liberation Sans';letter-spacing:0.100px;">CMW</div><div class="r" style="left:426.5px;top:104.5px;width:8px;height:8px;border-radius:50%;background:#a9c6e2"></div><div class="r" style="left:442px;top:100px;width:1px;height:16px;background:#666;"></div><div class="t" style="left:449.5px;top:100.14px;font-size:12px;line-height:16px;color:#000;font-family:'Liberation Sans';letter-spacing:0.209px;">frm_Accounting</div><div class="r" style="left:560px;top:96px;width:70px;height:22px;background:#1b61a2;"></div><div class="t" style="left:567.5px;top:100.14px;font-size:12px;line-height:16px;color:#fff;font-family:'Liberation Sans';letter-spacing:0.087px;">frxZLib</div><div class="r" style="left:613.5px;top:104.5px;width:8px;height:8px;border-radius:50%;background:#965862"></div><div class="r" style="left:380px;top:118px;width:811px;height:2px;background:#05529a;"></div><div class="r" style="left:380px;top:120px;width:811px;height:28px;background:#e6edf5;"></div><svg class="r" style="left:384px;top:122px;" width="20" height="20" viewBox="0 0 20 20"><rect x="3" y="2" width="6.5" height="4.6" rx="0.8" fill="#3a78b8"/><rect x="11" y="2" width="7" height="4.6" rx="0.8" fill="#3a78b8"/><rect x="3" y="8.2" width="15" height="7.8" rx="0.8" fill="#3a78b8"/><path d="M1.5 15 H7.5" stroke="#e6edf5" stroke-width="4"/><path d="M6 11 L10.5 15 L6 19 Z" fill="#e6edf5"/><path d="M2 15 H7" stroke="#45a077" stroke-width="2"/><path d="M6.5 12 L9.8 15 L6.5 18 Z" fill="#45a077"/></svg><svg class="r" style="left:408px;top:128px;" width="11" height="7" viewBox="0 0 11 7"><path d="M1 1 L5.5 6 L10 1" fill="none" stroke="#6e6e6e" stroke-width="1.2"/></svg><svg class="r" style="left:424px;top:123px;" width="18" height="18" viewBox="0 0 18 18"><path d="M3.5 1 H10.5 L14.5 5 V9 H3.5 Z" fill="#fff" stroke="#666" stroke-width="1.2"/><path d="M6 4 H8.5 M6 6 H9" stroke="#999" stroke-width="0.8"/><rect x="1.5" y="9.5" width="15" height="4" fill="#f6c6c6" stroke="#d9472f" stroke-width="1.3"/><path d="M5 11.5 H13" stroke="#6a6a6a" stroke-width="1.2"/><path d="M3.5 14 V16.5 H14.5 V14" fill="none" stroke="#666" stroke-width="1.2"/></svg><svg class="r" style="left:447px;top:128px;" width="11" height="7" viewBox="0 0 11 7"><path d="M1 1 L5.5 6 L10 1" fill="none" stroke="#6e6e6e" stroke-width="1.2"/></svg><div class="r" style="left:460px;top:121px;width:731px;height:23px;background:#f8fafc;"></div><div class="t" style="left:463.5px;top:124.82px;font-size:11.5px;line-height:15px;color:#000;font-family:'Liberation Sans';letter-spacing:0.070px;">TZCompressionStream</div><div class="r" style="left:968px;top:122px;width:20px;height:20px;background:#e3e9f0;"></div><svg class="r" style="left:972px;top:129px;" width="12" height="7" viewBox="0 0 12 7"><path d="M1 1 L6.0 6 L11 1" fill="none" stroke="#8a8a8a" stroke-width="1.0"/></svg><div class="t" style="left:995.3px;top:124.82px;font-size:11.5px;line-height:15px;color:#000;font-family:'Liberation Sans';letter-spacing:-0.053px;">TZCompressionStream.Seek</div><div class="r" style="left:380px;top:148px;width:811px;height:628px;background:#000080;"></div><div class="r" style="left:380px;top:148px;width:811px;height:628px;overflow:hidden"><div class="r" style="left:58px;top:7px;width:2px;height:2px;background:#c0c0c0"></div><div class="code" style="left:77px;top:2px;font-size:11.67px;line-height:15px;transform:scaleY(1.12);transform-origin:0 10.6px;-webkit-text-stroke:0.1px;">    <span style="color:#ffffff">begin</span></div><div class="r" style="left:58px;top:22px;width:2px;height:2px;background:#c0c0c0"></div><div class="r" style="left:5px;top:20px;width:6px;height:6px;box-sizing:border-box;border-radius:50%;background:#0000ff;border:1px solid #8888ff"></div><div class="code" style="left:77px;top:17px;font-size:11.67px;line-height:15px;transform:scaleY(1.12);transform-origin:0 10.6px;-webkit-text-stroke:0.1px;">      <span style="color:#ffff00">FStream</span><span style="color:#00ff00">.</span><span style="color:#ffff00">WriteBuffer</span><span style="color:#00ff00">(</span><span style="color:#ffff00">FBuffer</span><span style="color:#00ff00">,</span> <span style="color:#ffff00">SizeOf</span><span style="color:#00ff00">(</span><span style="color:#ffff00">FBuffer</span><span style="color:#00ff00">)</span><span style="color:#00ff00">)</span><span style="color:#00ff00">;</span></div><div class="r" style="left:58px;top:37px;width:2px;height:2px;background:#c0c0c0"></div><div class="r" style="left:57px;top:52px;width:4px;height:1px;background:#c0c0c0"></div><div class="r" style="left:5px;top:50px;width:6px;height:6px;box-sizing:border-box;border-radius:50%;background:#0000ff;border:1px solid #8888ff"></div><div class="code" style="left:77px;top:47px;font-size:11.67px;line-height:15px;transform:scaleY(1.12);transform-origin:0 10.6px;-webkit-text-stroke:0.1px;">      <span style="color:#ffff00">FZStream</span><span style="color:#00ff00">.</span><span style="color:#ffff00">next_out</span> <span style="color:#00ff00">:</span><span style="color:#00ff00">=</span> <span style="color:#00ff00">@</span><span style="color:#ffff00">FBuffer</span><span style="color:#00ff00">;</span></div><div class="r" style="left:58px;top:67px;width:2px;height:2px;background:#c0c0c0"></div><div class="r" style="left:5px;top:65px;width:6px;height:6px;box-sizing:border-box;border-radius:50%;background:#0000ff;border:1px solid #8888ff"></div><div class="code" style="left:77px;top:62px;font-size:11.67px;line-height:15px;transform:scaleY(1.12);transform-origin:0 10.6px;-webkit-text-stroke:0.1px;">      <span style="color:#ffff00">FZStream</span><span style="color:#00ff00">.</span><span style="color:#ffff00">avail_out</span> <span style="color:#00ff00">:</span><span style="color:#00ff00">=</span> <span style="color:#ffff00">SizeOf</span><span style="color:#00ff00">(</span><span style="color:#ffff00">FBuffer</span><span style="color:#00ff00">)</span><span style="color:#00ff00">;</span></div><div class="r" style="left:58px;top:82px;width:2px;height:2px;background:#c0c0c0"></div><div class="r" style="left:58px;top:97px;width:2px;height:2px;background:#c0c0c0"></div><div class="r" style="left:5px;top:95px;width:6px;height:6px;box-sizing:border-box;border-radius:50%;background:#0000ff;border:1px solid #8888ff"></div><div class="code" style="left:77px;top:92px;font-size:11.67px;line-height:15px;transform:scaleY(1.12);transform-origin:0 10.6px;-webkit-text-stroke:0.1px;">      <span style="color:#ffff00">FStreamPos</span> <span style="color:#00ff00">:</span><span style="color:#00ff00">=</span> <span style="color:#ffff00">FStream</span><span style="color:#00ff00">.</span><span style="color:#ffff00">Position</span><span style="color:#00ff00">;</span></div><div class="r" style="left:58px;top:112px;width:2px;height:2px;background:#c0c0c0"></div><div class="code" style="left:21px;top:122px;width:41px;text-align:right;font-size:11.67px;line-height:15px;-webkit-text-stroke:0.1px;color:#dcdcc4">530</div><div class="r" style="left:5px;top:125px;width:6px;height:6px;box-sizing:border-box;border-radius:50%;background:#0000ff;border:1px solid #8888ff"></div><div class="code" style="left:77px;top:122px;font-size:11.67px;line-height:15px;transform:scaleY(1.12);transform-origin:0 10.6px;-webkit-text-stroke:0.1px;">      <span style="color:#ffff00">DoProgress</span><span style="color:#00ff00">;</span></div><div class="r" style="left:58px;top:142px;width:2px;height:2px;background:#c0c0c0"></div><div class="code" style="left:77px;top:137px;font-size:11.67px;line-height:15px;transform:scaleY(1.12);transform-origin:0 10.6px;-webkit-text-stroke:0.1px;">    <span style="color:#ffffff">end</span><span style="color:#00ff00">;</span></div><div class="r" style="left:58px;top:157px;width:2px;height:2px;background:#c0c0c0"></div><div class="code" style="left:77px;top:152px;font-size:11.67px;line-height:15px;transform:scaleY(1.12);transform-origin:0 10.6px;-webkit-text-stroke:0.1px;">  <span style="color:#ffffff">end</span><span style="color:#00ff00">;</span></div><div class="r" style="left:58px;top:172px;width:2px;height:2px;background:#c0c0c0"></div><div class="r" style="left:58px;top:187px;width:2px;height:2px;background:#c0c0c0"></div><div class="r" style="left:5px;top:185px;width:6px;height:6px;box-sizing:border-box;border-radius:50%;background:#0000ff;border:1px solid #8888ff"></div><div class="code" style="left:77px;top:182px;font-size:11.67px;line-height:15px;transform:scaleY(1.12);transform-origin:0 10.6px;-webkit-text-stroke:0.1px;">  <span style="color:#ffff00">result</span> <span style="color:#00ff00">:</span><span style="color:#00ff00">=</span> <span style="color:#ffff00">Count</span><span style="color:#00ff00">;</span></div><div class="r" style="left:57px;top:202px;width:4px;height:1px;background:#c0c0c0"></div><div class="r" style="left:5px;top:200px;width:6px;height:6px;box-sizing:border-box;border-radius:50%;background:#0000ff;border:1px solid #8888ff"></div><div class="code" style="left:77px;top:197px;font-size:11.67px;line-height:15px;transform:scaleY(1.12);transform-origin:0 10.6px;-webkit-text-stroke:0.1px;"><span style="color:#ffffff">end</span><span style="color:#00ff00">;</span></div><div class="r" style="left:58px;top:217px;width:2px;height:2px;background:#c0c0c0"></div><div class="r" style="left:58px;top:232px;width:2px;height:2px;background:#c0c0c0"></div><div class="code" style="left:77px;top:227px;font-size:11.67px;line-height:15px;transform:scaleY(1.12);transform-origin:0 10.6px;-webkit-text-stroke:0.1px;"><span style="color:#ffffff">function</span> <span style="color:#ffff00">TZCompressionStream</span><span style="color:#00ff00">.</span><span style="color:#ffff00">Seek</span><span style="color:#00ff00">(</span><span style="color:#ffff00">offset</span><span style="color:#00ff00">:</span> <span style="color:#ffff00">Longint</span><span style="color:#00ff00">;</span> <span style="color:#ffff00">origin</span><span style="color:#00ff00">:</span> <span style="color:#ffff00">Word</span><span style="color:#00ff00">)</span><span style="color:#00ff00">:</span> <span style="color:#ffff00">Longint</span><span style="color:#00ff00">;</span></div><div class="r" style="left:58px;top:247px;width:2px;height:2px;background:#c0c0c0"></div><div class="r" style="left:5px;top:245px;width:6px;height:6px;box-sizing:border-box;border-radius:50%;background:#0000ff;border:1px solid #8888ff"></div><div class="code" style="left:77px;top:242px;font-size:11.67px;line-height:15px;transform:scaleY(1.12);transform-origin:0 10.6px;-webkit-text-stroke:0.1px;"><span style="color:#ffffff">begin</span></div><div class="r" style="left:58px;top:262px;width:2px;height:2px;background:#c0c0c0"></div><div class="r" style="left:5px;top:260px;width:6px;height:6px;box-sizing:border-box;border-radius:50%;background:#0000ff;border:1px solid #8888ff"></div><div class="code" style="left:77px;top:257px;font-size:11.67px;line-height:15px;transform:scaleY(1.12);transform-origin:0 10.6px;-webkit-text-stroke:0.1px;">  <span style="color:#ffffff">if</span> <span style="color:#00ff00">(</span><span style="color:#ffff00">offset</span> <span style="color:#00ff00">=</span> <span style="color:#ff00ff">0</span><span style="color:#00ff00">)</span> <span style="color:#ffffff">and</span> <span style="color:#00ff00">(</span><span style="color:#ffff00">origin</span> <span style="color:#00ff00">=</span> <span style="color:#ffff00">soFromCurrent</span><span style="color:#00ff00">)</span> <span style="color:#ffffff">then</span></div><div class="code" style="left:21px;top:272px;width:41px;text-align:right;font-size:11.67px;line-height:15px;-webkit-text-stroke:0.1px;color:#dcdcc4">540</div><div class="code" style="left:77px;top:272px;font-size:11.67px;line-height:15px;transform:scaleY(1.12);transform-origin:0 10.6px;-webkit-text-stroke:0.1px;">  <span style="color:#ffffff">begin</span></div><div class="r" style="left:58px;top:292px;width:2px;height:2px;background:#c0c0c0"></div><div class="r" style="left:5px;top:290px;width:6px;height:6px;box-sizing:border-box;border-radius:50%;background:#0000ff;border:1px solid #8888ff"></div><div class="code" style="left:77px;top:287px;font-size:11.67px;line-height:15px;transform:scaleY(1.12);transform-origin:0 10.6px;-webkit-text-stroke:0.1px;">    <span style="color:#ffff00">result</span> <span style="color:#00ff00">:</span><span style="color:#00ff00">=</span> <span style="color:#ffff00">FZStream</span><span style="color:#00ff00">.</span><span style="color:#ffff00">total_in</span><span style="color:#00ff00">;</span></div><div class="r" style="left:58px;top:307px;width:2px;height:2px;background:#c0c0c0"></div><div class="code" style="left:77px;top:302px;font-size:11.67px;line-height:15px;transform:scaleY(1.12);transform-origin:0 10.6px;-webkit-text-stroke:0.1px;">  <span style="color:#ffffff">end</span></div><div class="r" style="left:77px;top:315px;width:734px;height:15px;background:#ca9a97"></div><div class="code" style="left:21px;top:317px;width:41px;text-align:right;font-size:11.67px;line-height:15px;-webkit-text-stroke:0.1px;color:#dcdcc4">543</div><div class="code" style="left:77px;top:317px;font-size:11.67px;line-height:15px;transform:scaleY(1.12);transform-origin:0 10.6px;-webkit-text-stroke:0.1px;color:#000">  else raise EZCompressionError.Create(SZInvalid);</div><div class="r" style="left:58px;top:337px;width:2px;height:2px;background:#c0c0c0"></div><div class="r" style="left:5px;top:335px;width:6px;height:6px;box-sizing:border-box;border-radius:50%;background:#0000ff;border:1px solid #8888ff"></div><div class="code" style="left:77px;top:332px;font-size:11.67px;line-height:15px;transform:scaleY(1.12);transform-origin:0 10.6px;-webkit-text-stroke:0.1px;"><span style="color:#ffffff">end</span><span style="color:#00ff00">;</span></div><div class="r" style="left:57px;top:352px;width:4px;height:1px;background:#c0c0c0"></div><div class="r" style="left:58px;top:367px;width:2px;height:2px;background:#c0c0c0"></div><div class="code" style="left:77px;top:362px;font-size:11.67px;line-height:15px;transform:scaleY(1.12);transform-origin:0 10.6px;-webkit-text-stroke:0.1px;"><span style="color:#ffffff">function</span> <span style="color:#ffff00">TZCompressionStream</span><span style="color:#00ff00">.</span><span style="color:#ffff00">GetCompressionRate</span><span style="color:#00ff00">:</span> <span style="color:#ffff00">Single</span><span style="color:#00ff00">;</span></div><div class="r" style="left:58px;top:382px;width:2px;height:2px;background:#c0c0c0"></div><div class="r" style="left:5px;top:380px;width:6px;height:6px;box-sizing:border-box;border-radius:50%;background:#0000ff;border:1px solid #8888ff"></div><div class="code" style="left:77px;top:377px;font-size:11.67px;line-height:15px;transform:scaleY(1.12);transform-origin:0 10.6px;-webkit-text-stroke:0.1px;"><span style="color:#ffffff">begin</span></div><div class="r" style="left:58px;top:397px;width:2px;height:2px;background:#c0c0c0"></div><div class="r" style="left:5px;top:395px;width:6px;height:6px;box-sizing:border-box;border-radius:50%;background:#0000ff;border:1px solid #8888ff"></div><div class="code" style="left:77px;top:392px;font-size:11.67px;line-height:15px;transform:scaleY(1.12);transform-origin:0 10.6px;-webkit-text-stroke:0.1px;">  <span style="color:#ffffff">if</span> <span style="color:#ffff00">FZStream</span><span style="color:#00ff00">.</span><span style="color:#ffff00">total_in</span> <span style="color:#00ff00">=</span> <span style="color:#ff00ff">0</span> <span style="color:#ffffff">then</span> <span style="color:#ffff00">result</span> <span style="color:#00ff00">:</span><span style="color:#00ff00">=</span> <span style="color:#ff00ff">0</span></div><div class="r" style="left:58px;top:412px;width:2px;height:2px;background:#c0c0c0"></div><div class="r" style="left:5px;top:410px;width:6px;height:6px;box-sizing:border-box;border-radius:50%;background:#0000ff;border:1px solid #8888ff"></div><div class="code" style="left:77px;top:407px;font-size:11.67px;line-height:15px;transform:scaleY(1.12);transform-origin:0 10.6px;-webkit-text-stroke:0.1px;">  <span style="color:#ffffff">else</span> <span style="color:#ffff00">result</span> <span style="color:#00ff00">:</span><span style="color:#00ff00">=</span> <span style="color:#00ff00">(</span><span style="color:#ff00ff">1.0</span> <span style="color:#00ff00">-</span> <span style="color:#00ff00">(</span><span style="color:#ffff00">FZStream</span><span style="color:#00ff00">.</span><span style="color:#ffff00">total_out</span> <span style="color:#00ff00">/</span> <span style="color:#ffff00">FZStream</span><span style="color:#00ff00">.</span><span style="color:#ffff00">total_in</span><span style="color:#00ff00">)</span><span style="color:#00ff00">)</span> <span style="color:#00ff00">*</span> <span style="color:#ff00ff">100.0</span><span style="color:#00ff00">;</span></div><div class="code" style="left:21px;top:422px;width:41px;text-align:right;font-size:11.67px;line-height:15px;-webkit-text-stroke:0.1px;color:#dcdcc4">550</div><div class="r" style="left:5px;top:425px;width:6px;height:6px;box-sizing:border-box;border-radius:50%;background:#0000ff;border:1px solid #8888ff"></div><div class="code" style="left:77px;top:422px;font-size:11.67px;line-height:15px;transform:scaleY(1.12);transform-origin:0 10.6px;-webkit-text-stroke:0.1px;"><span style="color:#ffffff">end</span><span style="color:#00ff00">;</span></div><div class="r" style="left:58px;top:442px;width:2px;height:2px;background:#c0c0c0"></div><div class="r" style="left:58px;top:457px;width:2px;height:2px;background:#c0c0c0"></div><div class="code" style="left:77px;top:452px;font-size:11.67px;line-height:15px;transform:scaleY(1.12);transform-origin:0 10.6px;-webkit-text-stroke:0.1px;"><span style="color:#c0c0c0;font-style:italic">{** TZDecompressionStream ***************************************************}</span></div><div class="r" style="left:58px;top:472px;width:2px;height:2px;background:#c0c0c0"></div><div class="r" style="left:58px;top:487px;width:2px;height:2px;background:#c0c0c0"></div><div class="code" style="left:77px;top:482px;font-size:11.67px;line-height:15px;transform:scaleY(1.12);transform-origin:0 10.6px;-webkit-text-stroke:0.1px;"><span style="color:#ffffff">constructor</span> <span style="color:#ffff00">TZDecompressionStream</span><span style="color:#00ff00">.</span><span style="color:#ffff00">Create</span><span style="color:#00ff00">(</span><span style="color:#ffff00">source</span><span style="color:#00ff00">:</span> <span style="color:#ffff00">TStream</span><span style="color:#00ff00">)</span><span style="color:#00ff00">;</span></div><div class="r" style="left:57px;top:502px;width:4px;height:1px;background:#c0c0c0"></div><div class="code" style="left:77px;top:497px;font-size:11.67px;line-height:15px;transform:scaleY(1.12);transform-origin:0 10.6px;-webkit-text-stroke:0.1px;"><span style="color:#ffffff">begin</span></div><div class="r" style="left:58px;top:517px;width:2px;height:2px;background:#c0c0c0"></div><div class="code" style="left:77px;top:512px;font-size:11.67px;line-height:15px;transform:scaleY(1.12);transform-origin:0 10.6px;-webkit-text-stroke:0.1px;">  <span style="color:#ffffff">inherited</span> <span style="color:#ffff00">Create</span><span style="color:#00ff00">(</span><span style="color:#ffff00">source</span><span style="color:#00ff00">)</span><span style="color:#00ff00">;</span></div><div class="r" style="left:58px;top:532px;width:2px;height:2px;background:#c0c0c0"></div><div class="code" style="left:77px;top:527px;font-size:11.67px;line-height:15px;transform:scaleY(1.12);transform-origin:0 10.6px;-webkit-text-stroke:0.1px;">  <span style="color:#ffff00">FZStream</span><span style="color:#00ff00">.</span><span style="color:#ffff00">next_in</span> <span style="color:#00ff00">:</span><span style="color:#00ff00">=</span> <span style="color:#00ff00">@</span><span style="color:#ffff00">FBuffer</span><span style="color:#00ff00">;</span></div><div class="r" style="left:58px;top:547px;width:2px;height:2px;background:#c0c0c0"></div><div class="code" style="left:77px;top:542px;font-size:11.67px;line-height:15px;transform:scaleY(1.12);transform-origin:0 10.6px;-webkit-text-stroke:0.1px;">  <span style="color:#ffff00">FZStream</span><span style="color:#00ff00">.</span><span style="color:#ffff00">avail_in</span> <span style="color:#00ff00">:</span><span style="color:#00ff00">=</span> <span style="color:#ff00ff">0</span><span style="color:#00ff00">;</span></div><div class="r" style="left:58px;top:562px;width:2px;height:2px;background:#c0c0c0"></div><div class="code" style="left:77px;top:557px;font-size:11.67px;line-height:15px;transform:scaleY(1.12);transform-origin:0 10.6px;-webkit-text-stroke:0.1px;">  <span style="color:#ffff00">ZDecompressCheck</span><span style="color:#00ff00">(</span><span style="color:#ffff00">InflateInit</span><span style="color:#00ff00">(</span><span style="color:#ffff00">FZStream</span><span style="color:#00ff00">)</span><span style="color:#00ff00">)</span><span style="color:#00ff00">;</span></div><div class="code" style="left:21px;top:572px;width:41px;text-align:right;font-size:11.67px;line-height:15px;-webkit-text-stroke:0.1px;color:#dcdcc4">560</div><div class="code" style="left:77px;top:572px;font-size:11.67px;line-height:15px;transform:scaleY(1.12);transform-origin:0 10.6px;-webkit-text-stroke:0.1px;"><span style="color:#ffffff">end</span><span style="color:#00ff00">;</span></div><div class="r" style="left:58px;top:592px;width:2px;height:2px;background:#c0c0c0"></div><div class="r" style="left:58px;top:607px;width:2px;height:2px;background:#c0c0c0"></div><div class="code" style="left:77px;top:602px;font-size:11.67px;line-height:15px;transform:scaleY(1.12);transform-origin:0 10.6px;-webkit-text-stroke:0.1px;"><span style="color:#ffffff">destructor</span> <span style="color:#ffff00">TZDecompressionStream</span><span style="color:#00ff00">.</span><span style="color:#ffff00">Destroy</span><span style="color:#00ff00">;</span></div><div class="r" style="left:58px;top:622px;width:2px;height:2px;background:#c0c0c0"></div><div class="code" style="left:77px;top:617px;font-size:11.67px;line-height:15px;transform:scaleY(1.12);transform-origin:0 10.6px;-webkit-text-stroke:0.1px;"><span style="color:#ffffff">begin</span></div><svg class="r" style="left:428px;top:314px" width="14" height="15" viewBox="0 0 14 15"><path d="M8 1.2 L12.3 5.3 H9.6 V10 C9.6 12 7.5 13.3 2.3 13.3 C5 12.3 6.4 11.2 6.4 9.5 V5.3 H3.7 Z" fill="#e8a4c4" stroke="#e8587e" stroke-width="1"/></svg><svg class="r" style="left:0px;top:315px" width="16" height="15" viewBox="0 0 16 15"><path d="M1 4.5 H7 V1 L14.5 7.5 L7 14 V10.5 H1 Z" fill="#0000ff" stroke="#fff" stroke-width="1"/></svg><div class="r" style="left:70px;top:0px;width:1px;height:225px;background:#c8c8c0"></div><div class="r" style="left:67px;top:230px;width:7px;height:7px;box-sizing:border-box;border:1px solid #d0d0c8"></div><div class="r" style="left:69px;top:233px;width:3px;height:1px;background:#d0d0c8"></div><div class="r" style="left:70px;top:240px;width:1px;height:120px;background:#c8c8c0"></div><div class="r" style="left:67px;top:365px;width:7px;height:7px;box-sizing:border-box;border:1px solid #d0d0c8"></div><div class="r" style="left:69px;top:368px;width:3px;height:1px;background:#d0d0c8"></div><div class="r" style="left:70px;top:375px;width:1px;height:105px;background:#c8c8c0"></div><div class="r" style="left:67px;top:485px;width:7px;height:7px;box-sizing:border-box;border:1px solid #d0d0c8"></div><div class="r" style="left:69px;top:488px;width:3px;height:1px;background:#d0d0c8"></div><div class="r" style="left:70px;top:495px;width:1px;height:105px;background:#c8c8c0"></div><div class="r" style="left:67px;top:605px;width:7px;height:7px;box-sizing:border-box;border:1px solid #d0d0c8"></div><div class="r" style="left:69px;top:608px;width:3px;height:1px;background:#d0d0c8"></div><div class="r" style="left:70px;top:615px;width:1px;height:13px;background:#c8c8c0"></div><div class="r" style="left:70px;top:205px;width:5px;height:1px;background:#c8c8c0"></div><div class="r" style="left:70px;top:340px;width:5px;height:1px;background:#c8c8c0"></div><div class="r" style="left:70px;top:430px;width:5px;height:1px;background:#c8c8c0"></div><div class="r" style="left:70px;top:580px;width:5px;height:1px;background:#c8c8c0"></div><div class="r" style="left:75px;top:0px;width:1px;height:210px;background:#9c9c9c"></div><div class="r" style="left:75px;top:209px;width:7px;height:1px;background:#9c9c9c"></div><div class="r" style="left:89px;top:0px;width:1px;height:165px;background:#4682b4"></div><div class="r" style="left:89px;top:164px;width:7px;height:1px;background:#4682b4"></div><div class="r" style="left:103px;top:0px;width:1px;height:150px;background:#4a9a86"></div><div class="r" style="left:103px;top:0px;width:7px;height:1px;background:#4a9a86"></div><div class="r" style="left:103px;top:149px;width:7px;height:1px;background:#4a9a86"></div><div class="r" style="left:75px;top:240px;width:1px;height:105px;background:#9c9c9c"></div><div class="r" style="left:75px;top:240px;width:7px;height:1px;background:#9c9c9c"></div><div class="r" style="left:75px;top:344px;width:7px;height:1px;background:#9c9c9c"></div><div class="r" style="left:89px;top:270px;width:1px;height:45px;background:#4682b4"></div><div class="r" style="left:89px;top:270px;width:7px;height:1px;background:#4682b4"></div><div class="r" style="left:89px;top:314px;width:7px;height:1px;background:#4682b4"></div><div class="r" style="left:75px;top:375px;width:1px;height:60px;background:#9c9c9c"></div><div class="r" style="left:75px;top:375px;width:7px;height:1px;background:#9c9c9c"></div><div class="r" style="left:75px;top:434px;width:7px;height:1px;background:#9c9c9c"></div><div class="r" style="left:75px;top:495px;width:1px;height:90px;background:#9c9c9c"></div><div class="r" style="left:75px;top:495px;width:7px;height:1px;background:#9c9c9c"></div><div class="r" style="left:75px;top:584px;width:7px;height:1px;background:#9c9c9c"></div><div class="r" style="left:75px;top:615px;width:1px;height:13px;background:#9c9c9c"></div><div class="r" style="left:75px;top:615px;width:7px;height:1px;background:#9c9c9c"></div><div class="r" style="left:637px;top:0;width:1px;height:628px;background:#c0c0c0"></div></div><div class="r" style="left:380px;top:776px;width:811px;height:16px;background:#eef2f6;"></div><div class="r" style="left:397px;top:777px;width:75px;height:15px;background:#c5d6e4;"></div><svg class="r" style="left:385px;top:779px;" width="8" height="11" viewBox="0 0 8 11"><path d="M6 1 L1.5 5.5 L6 10" fill="none" stroke="#7a7a7a" stroke-width="1.2"/></svg><div class="r" style="left:380px;top:792px;width:811px;height:25px;background:#e6edf5;"></div><svg class="r" style="left:384px;top:799px;" width="14" height="14" viewBox="0 0 14 14"><path d="M1 1 L13 6.5 L1 12 Z" fill="#7a7a7a"/></svg><div class="r" style="left:405.5px;top:800.5px;width:11px;height:11px;border-radius:50%;background:#d84b2f"></div><div class="r" style="left:425.5px;top:801px;width:10px;height:10px;background:#7a7a7a;"></div><div class="r" style="left:454px;top:795px;width:1px;height:20px;background:#c8d0d8;"></div><div class="r" style="left:539px;top:795px;width:1px;height:20px;background:#c8d0d8;"></div><div class="r" style="left:639px;top:795px;width:1px;height:20px;background:#c8d0d8;"></div><div class="r" style="left:714px;top:795px;width:1px;height:20px;background:#c8d0d8;"></div><div class="r" style="left:794px;top:795px;width:1px;height:20px;background:#c8d0d8;"></div><div class="r" style="left:915px;top:795px;width:1px;height:20px;background:#c8d0d8;"></div><div class="r" style="left:1064px;top:795px;width:1px;height:20px;background:#c8d0d8;"></div><div class="r" style="left:624px;top:799px;width:1px;height:14px;background:#a8c0d8;"></div><div class="r" style="left:779px;top:799px;width:1px;height:14px;background:#a8c0d8;"></div><div class="r" style="left:899px;top:799px;width:1px;height:14px;background:#a8c0d8;"></div><div class="t" style="left:482.8px;top:797.64px;font-size:12px;line-height:16px;color:#000;font-family:'Liberation Sans';letter-spacing:-0.050px;">543: 50</div><div class="t" style="left:568.5px;top:797.64px;font-size:12px;line-height:16px;color:#000;font-family:'Liberation Sans';letter-spacing:-0.003px;">Insert</div><div class="t" style="left:730.3px;top:797.64px;font-size:12px;line-height:16px;color:#000;font-family:'Liberation Sans';letter-spacing:0.178px;">Delphi</div><div class="t" style="left:833.8px;top:797.64px;font-size:12px;line-height:16px;color:#000;font-family:'Liberation Sans';letter-spacing:-0.029px;">ANSI</div><svg class="r" style="left:628px;top:803px;" width="8" height="5" viewBox="0 0 8 5"><path d="M0 0 H7 L3.5 4.5 Z" fill="#222"/></svg><svg class="r" style="left:782.5px;top:803px;" width="8" height="5" viewBox="0 0 8 5"><path d="M0 0 H7 L3.5 4.5 Z" fill="#222"/></svg><svg class="r" style="left:902.5px;top:803px;" width="8" height="5" viewBox="0 0 8 5"><path d="M0 0 H7 L3.5 4.5 Z" fill="#222"/></svg><div class="r" style="left:923.5px;top:805px;width:12.5px;height:2.5px;background:#45a077;"></div><div class="r" style="left:947.5px;top:805.5px;width:86.5px;height:1px;background:#888;"></div><div class="r" style="left:960.5px;top:799px;width:8px;height:14.5px;background:#3a78b8;"></div><div class="r" style="left:1045.5px;top:805px;width:13.5px;height:2.5px;background:#45a077;"></div><div class="r" style="left:1051px;top:799.5px;width:2.5px;height:13.5px;background:#45a077;"></div><svg class="r" style="left:1071px;top:799px;" width="14" height="14" viewBox="0 0 14 14"><circle cx="7" cy="7" r="6" fill="#6a6a6a"/><path d="M7 3.5 V8" stroke="#fff" stroke-width="1.8"/><circle cx="7" cy="10.3" r="1" fill="#fff"/></svg><div class="t" style="left:1098.5px;top:798.82px;font-size:11.5px;line-height:15px;color:#8a8a8a;font-family:'Liberation Sans';">0</div><svg class="r" style="left:1119px;top:799px;" width="14" height="14" viewBox="0 0 14 14"><path d="M7 1.5 L13 12.5 H1 Z" fill="#a0a0a0"/><path d="M7 5 V9" stroke="#fff" stroke-width="1.4"/><circle cx="7" cy="10.8" r="0.8" fill="#fff"/></svg><div class="t" style="left:1146.5px;top:798.82px;font-size:11.5px;line-height:15px;color:#8a8a8a;font-family:'Liberation Sans';">0</div><svg class="r" style="left:1167px;top:799px;" width="14" height="14" viewBox="0 0 14 14"><circle cx="7" cy="7" r="6" fill="#6a6a6a"/><path d="M7 6 V10.5" stroke="#fff" stroke-width="1.8"/><circle cx="7" cy="3.8" r="1" fill="#fff"/></svg>
</body></html>
